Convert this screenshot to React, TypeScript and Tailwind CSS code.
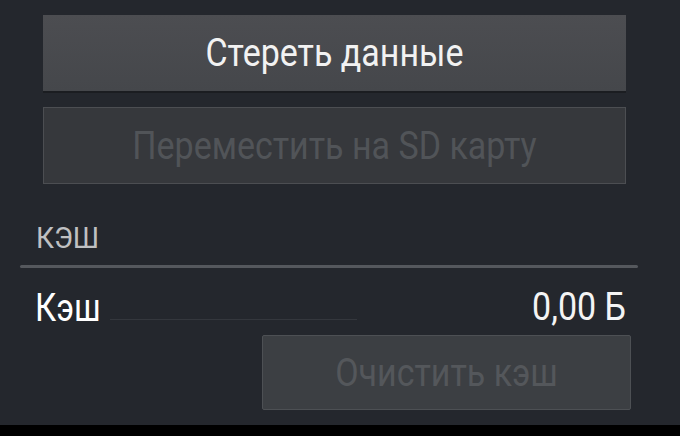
export default function App() {
  return (
    <div
      className="w-[680px] h-[436px] bg-[#24272d] flex flex-col overflow-hidden"
      style={{ fontFamily: 'Roboto, "Noto Sans", sans-serif' }}
    >
      <div className="flex flex-col px-[43px] pt-[15px] pr-[54px]">
        <button className="h-[76px] bg-gradient-to-b from-[#4c4d51] to-[#45474b] text-[#f2f2f2] text-[34px] leading-none flex items-center justify-center shadow-[0_2px_0_#1b1d21]">
          <span className="scale-y-[1.12]">Стереть данные</span>
        </button>
        <div className="h-[16px]" />
        <button className="h-[77px] bg-[#36383c] border border-[#4c4e52] text-[#515458] text-[34px] leading-none flex items-center justify-center">
          <span className="scale-y-[1.12]">Переместить на SD карту</span>
        </button>
      </div>

      <div className="h-[81px] pl-[36px] pt-[40px] text-[28px] text-[#bfc0c2] leading-none">
        <span className="inline-block scale-y-[1.08]">КЭШ</span>
      </div>
      <div className="mx-[20px] w-[618px] h-[3px] bg-[#55585d] rounded-full" />

      <div className="flex items-end pl-[35px] pr-[54px] pt-[22px]">
        <span className="text-[33px] leading-none text-white inline-block scale-y-[1.15]">Кэш</span>
        <div className="ml-[9px] mb-[4px] w-[247px] h-px bg-[#34373d]" />
        <span className="ml-auto text-[34px] leading-none text-[#f4f4f4] inline-block scale-y-[1.12]">0,00 Б</span>
      </div>

      <div className="flex justify-end pr-[49px] pt-[11px]">
        <button className="w-[369px] h-[75px] rounded-[2px] bg-[#3c3f43] border border-[#4d5054] text-[#54575b] text-[34px] leading-none flex items-center justify-center">
          <span className="scale-y-[1.12]">Очистить кэш</span>
        </button>
      </div>

      <div className="mt-auto h-[11px] bg-black" />
    </div>
  );
}
